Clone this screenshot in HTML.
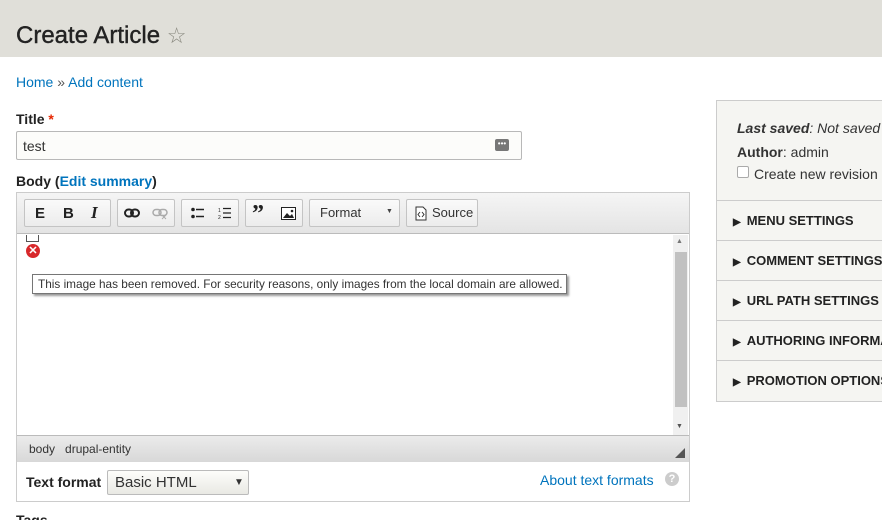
<!DOCTYPE html>
<html><head><style>
*{box-sizing:border-box}
html,body{margin:0;width:882px;height:520px;overflow:hidden}
body{background:#fff;font-family:"Liberation Sans",sans-serif;color:#222;position:relative;font-size:14px}
.a{position:absolute}
a{color:#0074bd;text-decoration:none}
.btn{position:absolute;top:199px;height:28px;border:1px solid #c4c4c4;border-radius:2px;background:linear-gradient(#fafafa,#ececec)}
.ic{position:absolute;top:5px;font-weight:bold;font-size:15px;color:#222}
.sec{position:absolute;left:0;width:170px;height:40px;border-top:1px solid #ccc;padding:12px 0 0 16px;font-weight:bold;font-size:13px;white-space:nowrap;color:#222}
.sec span{font-size:10px;margin-right:6px}
</style></head><body>
<div class="a" style="left:0;top:0;width:882px;height:57px;background:#e0dfd9"></div>
<div class="a" style="left:16px;top:22px;font-size:24px;color:#232323;-webkit-text-stroke:0.4px #232323">Create Article <span style="color:#8a8a80;-webkit-text-stroke:0;font-size:22px">☆</span></div>
<div class="a" style="left:16px;top:74px"><a>Home</a> <span style="color:#555">»</span> <a>Add content</a></div>
<div class="a" style="left:16px;top:111px;font-weight:bold">Title <span style="color:#e62600">*</span></div>
<div class="a" style="left:16px;top:131px;width:506px;height:29px;background:#fcfcfa;border:1px solid #b8b8b8;border-radius:2px;padding:6px 6px;color:#333">test</div>
<div class="a" style="left:495px;top:139px;width:14px;height:12px;background:#777;border-radius:2px;color:#fff;font-size:8px;line-height:10px;text-align:center">•••</div>
<div class="a" style="left:16px;top:173px;font-weight:bold">Body (<a>Edit summary</a>)</div>
<div class="a" style="left:16px;top:192px;width:674px;height:310px;border:1px solid #ccc"></div>
<div class="a" style="left:17px;top:193px;width:672px;height:41px;background:linear-gradient(#f5f5f5,#e4e4e4);border-bottom:1px solid #bbb"></div>
<div class="btn" style="left:24px;width:87px"><span class="ic" style="left:10px">E</span><span class="ic" style="left:38px">B</span><span class="ic" style="left:66px;font-style:italic;font-family:'Liberation Serif',serif;font-size:17px;top:3px">I</span></div>
<div class="btn" style="left:117px;width:58px">
<svg class="a" style="left:6px;top:8px" width="16" height="10"><rect x="1" y="1.5" width="8" height="7" rx="3.5" fill="none" stroke="#222" stroke-width="2"/><rect x="7" y="1.5" width="8" height="7" rx="3.5" fill="none" stroke="#222" stroke-width="2"/></svg>
<svg class="a" style="left:34px;top:8px" width="16" height="12"><rect x="1" y="1.5" width="8" height="6" rx="3" fill="none" stroke="#aaa" stroke-width="1.5"/><rect x="7" y="1.5" width="8" height="6" rx="3" fill="none" stroke="#aaa" stroke-width="1.5"/><path d="M10 7L14 11M14 7L10 11" stroke="#aaa"/></svg></div>
<div class="btn" style="left:181px;width:58px">
<svg class="a" style="left:9px;top:7px" width="14" height="12"><circle cx="2" cy="2.5" r="1.8" fill="#222"/><circle cx="2" cy="9.5" r="1.8" fill="#222"/><path d="M5 2.5H13M5 9.5H13" stroke="#222" stroke-width="1.5"/></svg>
<svg class="a" style="left:36px;top:7px" width="14" height="12"><text x="0" y="5" font-size="5" fill="#222">1</text><text x="0" y="12" font-size="5" fill="#222">2</text><path d="M5 1.5H13M5 6H13M5 10.5H13" stroke="#222" stroke-width="1.3"/></svg></div>
<div class="btn" style="left:245px;width:58px"><span class="ic" style="left:6px;font-size:24px;top:1px;font-family:'Liberation Serif',serif">”</span><svg class="a" style="left:35px;top:7px" width="15" height="13"><rect x="0.5" y="0.5" width="14" height="12" fill="#fff" stroke="#222"/><path d="M2 11 L6 6 L9 9 L11 7 L13 11Z" fill="#222"/><circle cx="11" cy="4" r="1.3" fill="#222"/></svg></div>
<div class="btn" style="left:309px;width:91px"><span class="a" style="left:10px;top:5px;color:#333;font-size:13px">Format</span><span class="a" style="left:76px;top:8px;font-size:7px;color:#444">▼</span></div>
<div class="btn" style="left:406px;width:72px"><svg class="a" style="left:8px;top:6px" width="12" height="15"><path d="M1 1H8L11 4V14H1Z" fill="#fff" stroke="#333"/><path d="M5 6L3 8.5L5 11M7 6L9 8.5L7 11" stroke="#333" fill="none"/></svg><span class="a" style="left:25px;top:5px;color:#333;font-size:13px">Source</span></div>
<div class="a" style="left:673px;top:235px;width:15px;height:200px;background:#f0f0f0"></div>
<div class="a" style="left:675px;top:252px;width:12px;height:155px;background:#c1c1c1"></div>
<div class="a" style="left:676px;top:238px;font-size:7px;color:#777">▲</div>
<div class="a" style="left:676px;top:423px;font-size:7px;color:#555">▼</div>
<div class="a" style="left:26px;top:235px;width:13px;height:7px;border:1px solid #555;border-top:none"></div>
<div class="a" style="left:26px;top:244px;width:14px;height:14px;border-radius:50%;background:#d8282b;color:#fff;font-size:11px;font-weight:bold;line-height:14px;text-align:center">✕</div>
<div class="a" style="left:32px;top:274px;width:535px;height:20px;border:1px solid #767676;background:#fff;box-shadow:2px 2px 2px #999;padding:2px 5px;color:#333;white-space:nowrap;overflow:hidden;font-size:11.8px;line-height:14px">This image has been removed. For security reasons, only images from the local domain are allowed.</div>
<div class="a" style="left:17px;top:435px;width:672px;height:27px;background:linear-gradient(#ebebeb,#d8d8d8);border-top:1px solid #bbb"></div>
<div class="a" style="left:29px;top:442px;font-size:12px;color:#333">body &nbsp; drupal-entity</div>
<svg class="a" style="left:675px;top:448px" width="10" height="10"><path d="M10 0V10H0Z" fill="#555"/></svg>
<div class="a" style="left:26px;top:474px;font-weight:bold">Text format</div>
<div class="a" style="left:107px;top:470px;width:142px;height:25px;border:1px solid #bbb;border-radius:2px;background:linear-gradient(#fdfdfb,#e9e9e4);padding:3px 7px;font-size:15px;color:#333">Basic HTML<span class="a" style="left:126px;top:6px;font-size:10px">▼</span></div>
<div class="a" style="left:540px;top:472px"><a>About text formats</a></div>
<div class="a" style="left:665px;top:472px;width:14px;height:14px;border-radius:50%;background:#ccc;color:#fff;font-size:11px;font-weight:bold;line-height:14px;text-align:center">?</div>
<div class="a" style="left:16px;top:512px;font-weight:bold">Tags</div>
<div class="a" style="left:716px;top:100px;width:166px;height:302px;overflow:hidden">
<div class="a" style="left:0;top:0;width:200px;height:302px;background:#f5f5f2;border:1px solid #ccc">
<div class="a" style="left:20px;top:19px;white-space:nowrap;font-style:italic;color:#333"><b>Last saved</b>: Not saved yet</div>
<div class="a" style="left:20px;top:43px;white-space:nowrap;color:#333"><b>Author</b>: admin</div>
<div class="a" style="left:20px;top:65px;width:12px;height:12px;border:1px solid #aaa;border-radius:2px;background:#fff"></div>
<div class="a" style="left:37px;top:65px;white-space:nowrap;color:#333">Create new revision</div>
<div class="sec" style="top:99px"><span>▶</span>MENU SETTINGS</div>
<div class="sec" style="top:139px"><span>▶</span>COMMENT SETTINGS</div>
<div class="sec" style="top:179px"><span>▶</span>URL PATH SETTINGS</div>
<div class="sec" style="top:219px"><span>▶</span>AUTHORING INFORMATION</div>
<div class="sec" style="top:259px"><span>▶</span>PROMOTION OPTIONS</div>
</div></div>
</body></html>
